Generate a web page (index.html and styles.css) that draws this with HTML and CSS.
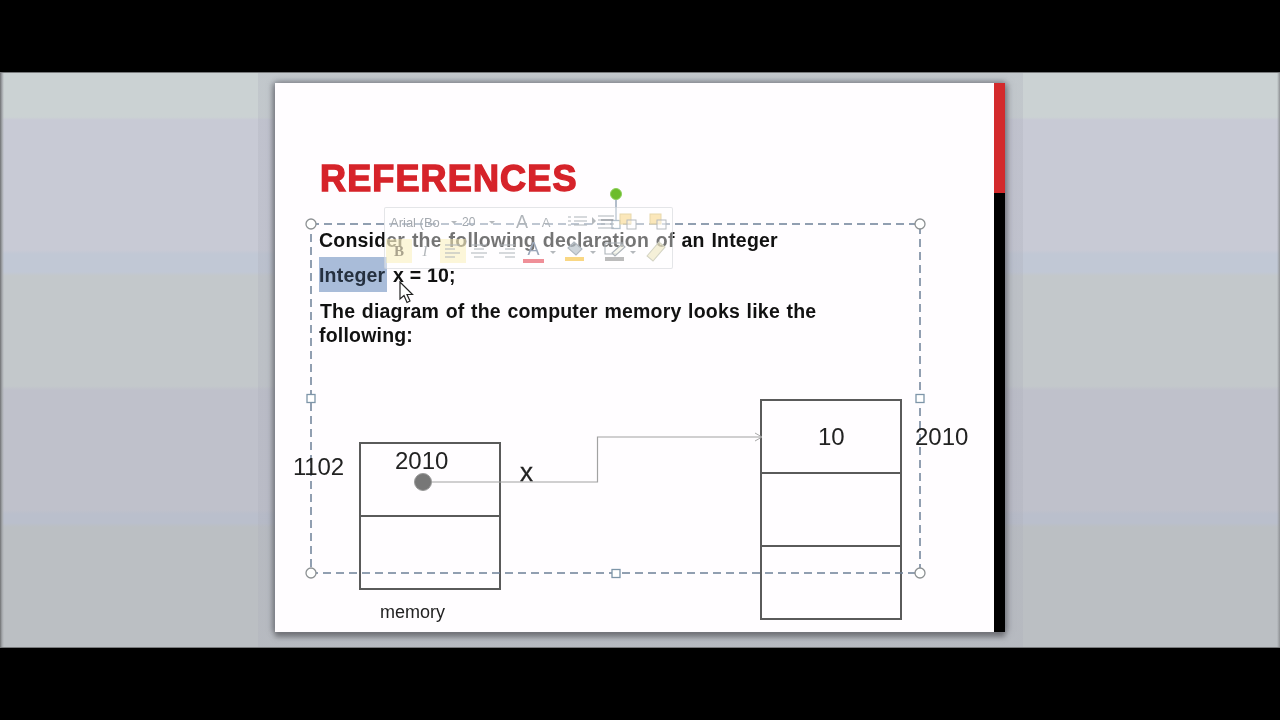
FILE: index.html
```html
<!DOCTYPE html>
<html lang="en">
<head>
<meta charset="utf-8">
<title>References</title>
<link rel="stylesheet" href="styles.css">
</head>
<body>
<div class="letterbox"></div>
<main class="stage">
  <section class="slide">
    <div class="side-bar"><div class="side-red"></div><div class="side-black"></div></div>
    <h1 class="title">REFERENCES</h1>

    <p class="line l1">Consider the following declaration of an Integer</p>
    <p class="line l2"><span class="sel">Integer</span> x = 10;</p>
    <p class="line l3">The diagram of the computer memory looks like the</p>
    <p class="line l4">following:</p>

    <svg class="art" width="730" height="549" viewBox="275 83 730 549" aria-hidden="true">
      <g class="boxes">
        <rect x="360" y="443" width="140" height="146"/>
        <path d="M360 516H500"/>
        <rect x="761" y="400" width="140" height="219"/>
        <path d="M761 473H901M761 546H901"/>
      </g>
      <g class="frame">
        <path d="M311 224H920V573H311V224"/>
        <path class="stem" d="M616 199V224"/>
      </g>
      <path class="wire" d="M423 482H597.5V437H761"/>
      <path class="arrow" d="M755 433L762 437L755 441"/>
      <circle class="dot" cx="423" cy="482" r="8.5"/>
      <g class="handles">
        <circle cx="311" cy="224" r="5"/><circle cx="920" cy="224" r="5"/>
        <circle cx="311" cy="573" r="5"/><circle cx="920" cy="573" r="5"/>
        <rect x="307" y="394.5" width="8" height="8"/><rect x="916" y="394.5" width="8" height="8"/>
        <rect x="612" y="569.5" width="8" height="8"/><rect x="612" y="220.5" width="8" height="8"/>
      </g>
      <circle class="rotate" cx="616" cy="194" r="5.5"/>
    </svg>

    <span class="label n1102">1102</span>
    <span class="label n2010a">2010</span>
    <span class="label vx">x</span>
    <span class="label n10">10</span>
    <span class="label n2010b">2010</span>
    <span class="label mem">memory</span>

    <div class="mini">
      <div class="mini-row">
        <span class="mini-font">Arial (Bo</span>
        <svg class="ic w12" viewBox="0 0 12 20"><path class="solid" d="M3 9h6l-3 3z"/></svg>
        <span class="mini-size">20</span>
        <svg class="ic w28" viewBox="0 0 28 20"><path class="solid" d="M11 9h6l-3 3z"/></svg>
        <span class="mini-a big">A</span>
        <span class="mini-a small">A</span>
        <svg class="ic w26" viewBox="0 0 26 20"><path d="M2 5h3M2 9h3M2 13h3M8 5h13M8 9h13M8 13h13"/></svg>
        <svg class="ic w26" viewBox="0 0 26 20"><path class="solid" d="M0 5l4 4-4 4z"/><path d="M6 4h16M6 8h16M9 12h13M6 16h16"/><path class="dark" d="M9 8h12"/></svg>
        <svg class="ic w26 pull" viewBox="0 0 26 20"><rect class="yellow" x="4" y="2" width="11" height="10"/><rect x="11" y="8" width="9" height="9"/></svg>
        <svg class="ic w26 gap" viewBox="0 0 26 20"><rect class="yellow" x="4" y="2" width="11" height="10"/><rect x="11" y="8" width="9" height="9"/></svg>
      </div>
      <div class="mini-row second">
        <span class="mini-btn active bold">B</span>
        <span class="mini-btn ital">I</span>
        <svg class="ic w26 active tight" viewBox="0 0 26 24"><path d="M5 6h15M5 10h10M5 14h15M5 18h10"/></svg>
        <svg class="ic w26" viewBox="0 0 26 24"><path d="M5 6h16M8 10h10M5 14h16M8 18h10"/></svg>
        <svg class="ic w26 tight" viewBox="0 0 26 24"><path d="M5 6h16M11 10h10M5 14h16M11 18h10"/></svg>
        <span class="mini-color">A</span>
        <svg class="ic w12" viewBox="0 0 12 24"><path class="solid" d="M3 12h6l-3 3z"/></svg>
        <svg class="ic w26 tight" viewBox="0 0 26 24"><path class="bucket" d="M13 3l8 7-6 6-8-7z"/><rect class="bar-y" x="4" y="18" width="19" height="4"/></svg>
        <svg class="ic w12" viewBox="0 0 12 24"><path class="solid" d="M3 12h6l-3 3z"/></svg>
        <svg class="ic w26 tight" viewBox="0 0 26 24"><path d="M4 4h18M4 4v11h12"/><path class="pen" d="M11 14l10-9 3 3-10 9z"/><rect class="bar-g" x="4" y="18" width="19" height="4"/></svg>
        <svg class="ic w12" viewBox="0 0 12 24"><path class="solid" d="M3 12h6l-3 3z"/></svg>
        <svg class="ic w26 tight" viewBox="0 0 26 24"><path class="eraser" d="M6 17L18 3l6 5-12 14z"/></svg>
      </div>
    </div>

    <svg class="cursor" width="16" height="24" viewBox="0 0 16 24" aria-hidden="true">
      <path d="M1 1V18L5 14.5L8 21.5L11 20L8 13.5H13.5Z"/>
    </svg>
  </section>
</main>
<div class="letterbox"></div>
</body>
</html>
```
FILE: styles.css
```css
* { box-sizing: border-box; }
html, body { margin: 0; height: 100%; background: #000; overflow: hidden; }
body { display: flex; flex-direction: column; font-family: "Liberation Sans", Arial, sans-serif; }

.letterbox { height: 72px; flex: none; background: #000; }

.stage {
  height: 576px;
  flex: none;
  display: flex;
  padding: 11px 275px 16px;
  background:
    linear-gradient(180deg, #77797b 0, #77797b 1px, transparent 1px, transparent 575px, #77797b 575px),
    linear-gradient(90deg, #6e7072 0, #a4a7ab 2px, transparent 4px, transparent calc(100% - 3px), #8e9194 100%),
    linear-gradient(90deg, transparent 258px, rgba(172,174,186,.3) 258px, rgba(172,174,186,.3) 1023px, transparent 1023px),
    linear-gradient(180deg,
      #cbd2d3 0, #cbd2d3 45px,
      #c8cad5 48px, #c8cad5 178px,
      #c1c8d5 182px, #c1c8d5 200px,
      #c3c8cb 204px, #c3c8cb 314px,
      #bfc1cb 318px, #bfc1cb 438px,
      #babfcc 442px, #babfcc 451px,
      #bbbfc3 455px, #bbbfc3 576px);
}

.slide {
  position: relative;
  width: 730px;
  height: 549px;
  background: #fffdff;
  box-shadow: 0 -3px 4px rgba(130,132,140,.35), -3px 0 5px rgba(110,112,120,.6), 3px 0 6px rgba(110,112,120,.6), 0 5px 5px rgba(100,102,106,.75);
}

.side-bar { position: absolute; right: 0; top: 0; width: 11px; height: 100%; display: flex; flex-direction: column; }
.side-red { height: 110px; background: #d32a2c; }
.side-black { flex: 1; background: #000; }

.title {
  position: absolute;
  left: 45px;
  top: 76px;
  margin: 0;
  font-size: 36px;
  line-height: 40px;
  font-weight: 700;
  color: #d6232a;
  -webkit-text-stroke: 1.4px #d6232a;
  letter-spacing: 1.15px;
  white-space: nowrap;
  filter: blur(.3px);
}

.line {
  position: absolute;
  left: 44px;
  margin: 0;
  font-size: 19.5px;
  line-height: 24px;
  font-weight: 700;
  letter-spacing: .2px;
  color: #111;
  white-space: nowrap;
  filter: blur(.3px);
}
.l1 { top: 145px; word-spacing: 1.2px; }
.l2 { top: 180px; }
.l3 { top: 216px; left: 45px; word-spacing: .95px; }
.l4 { top: 240px; }
.sel { background: #a9bcd9; color: #25303f; display: inline-block; height: 35px; margin-top: -6px; padding: 6px 2px 5px 0; vertical-align: top; }

.art { position: absolute; left: 0; top: 0; }
.frame path { fill: none; stroke: #6d8098; stroke-width: 1.5; stroke-dasharray: 8 5; }
.frame .stem { stroke: #7f93a8; stroke-width: 1.2; stroke-dasharray: none; }
.boxes rect, .boxes path { fill: none; stroke: #5a5a5a; stroke-width: 2; }
.wire { fill: none; stroke: #a2a2a2; stroke-width: 1.2; }
.arrow { fill: none; stroke: #a8a8a8; stroke-width: 1; }
.dot { fill: #777; stroke: #9a9a9a; stroke-width: 1; }
.handles circle { fill: #fff; stroke: #8d9193; stroke-width: 1.3; }
.handles rect { fill: #fff; stroke: #7d95a8; stroke-width: 1.3; }
.rotate { fill: #6cbc2a; stroke: #8ed05c; stroke-width: 1; }

.label { position: absolute; font-size: 24px; line-height: 28px; color: #222; white-space: nowrap; filter: blur(.3px); }
.n1102 { left: 18px; top: 370px; letter-spacing: -.2px; }
.n2010a { left: 120px; top: 364px; }
.vx { left: 245px; top: 375px; font-size: 26px; -webkit-text-stroke: .3px #222; }
.n10 { left: 543px; top: 340px; }
.n2010b { left: 640px; top: 340px; }
.mem { left: 105px; top: 519px; font-size: 18px; line-height: 20px; }

.mini {
  position: absolute;
  left: 109px;
  top: 124px;
  width: 289px;
  height: 62px;
  padding: 2px 2px 0 1px;
  background: rgba(255,255,255,.42);
  border: 1px solid rgba(190,195,200,.42);
  border-radius: 2px;
  display: flex;
  flex-direction: column;
  gap: 4px;
  color: #a4a9af;
  font-size: 13px;
  filter: blur(.4px);
}
.mini-row { display: flex; align-items: center; height: 24px; flex: none; }
.second { height: 26px; }
.mini-font { width: 62px; padding-left: 4px; flex: none; white-space: nowrap; }
.mini-size { width: 18px; flex: none; padding-left: 2px; font-size: 12px; }
.mini-a { flex: none; width: 24px; text-align: center; color: #b0b5ba; }
.mini-a.big { font-size: 18px; margin-left: 4px; }
.mini-a.small { font-size: 13px; margin-right: 8px; }

.ic { flex: none; height: 20px; display: block; }
.second .ic { height: 24px; }
.ic.w12 { width: 12px; }
.ic.w26 { width: 26px; }
.ic.w28 { width: 28px; }
.gap { margin-left: 4px; }
.pull { margin-left: -2px; }
.tight { margin-left: 2px; }
.ic path { fill: none; stroke: #aeb4ba; stroke-width: 1.1; }
.ic .solid { fill: #b4b8bc; stroke: none; }
.ic .dark { stroke: #8b9096; }
.ic rect { fill: rgba(255,255,255,.4); stroke: #b6babf; stroke-width: 1; }
.ic .yellow { fill: rgba(248,215,140,.6); stroke: #e8d8ac; }
.ic .bucket { fill: rgba(180,190,200,.65); stroke: #b0b8c0; }
.ic .bar-y { fill: rgba(248,208,110,.85); stroke: none; }
.ic .bar-g { fill: #bcbcbc; stroke: none; }
.ic .pen { fill: rgba(240,240,225,.6); }
.ic .eraser { fill: rgba(240,232,195,.65); stroke: #d4d4c4; }

.active { background: rgba(250,238,180,.5); }
.mini-btn { flex: none; width: 26px; height: 24px; display: flex; align-items: center; justify-content: center; font-family: "Liberation Serif", serif; font-size: 15px; color: #aaa38d; }
.mini-btn.bold { font-weight: 700; }
.mini-btn.ital { font-style: italic; color: #b3b7bb; }
.mini-color { flex: none; width: 21px; margin: 0 3px 0 3px; text-align: center; font-size: 18px; color: #9aa6b8; border-bottom: 4px solid #ef8f98; line-height: 20px; }

.cursor { position: absolute; left: 124px; top: 198px; filter: blur(.3px); }
.cursor path { fill: #fff; stroke: #222; stroke-width: 1.2; stroke-linejoin: miter; }
```
